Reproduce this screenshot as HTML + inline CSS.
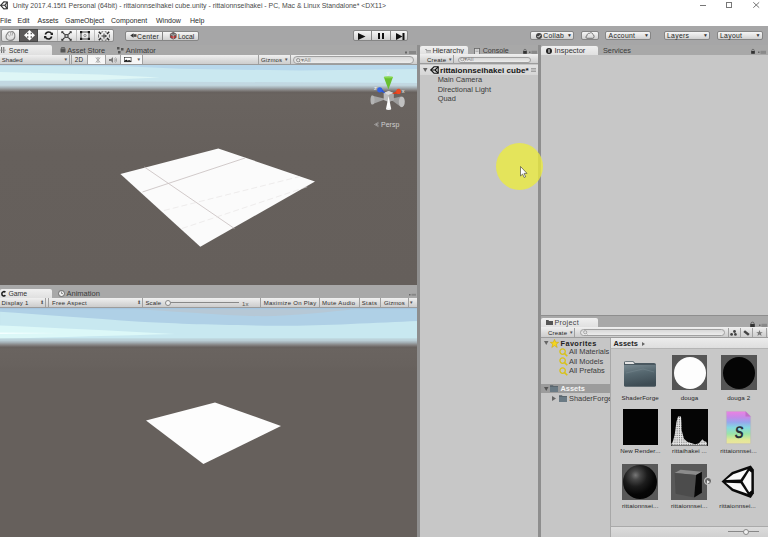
<!DOCTYPE html>
<html><head><meta charset="utf-8">
<style>
*{box-sizing:border-box;margin:0;padding:0}
html,body{width:768px;height:537px;overflow:hidden}
body{position:relative;background:#a3a3a3;font-family:"Liberation Sans",sans-serif;font-size:7.2px;color:#1a1a1a}
.a{position:absolute}
.t{position:absolute;white-space:nowrap;line-height:1}
svg{position:absolute;overflow:visible}
.btn{position:absolute;background:linear-gradient(#f6f6f6,#dcdcdc 70%,#cfcfcf);border:1px solid #858585;border-radius:2px}
.tabrow{position:absolute;background:#a8a8a8}
.tab{position:absolute;background:linear-gradient(#f0f0f0,#e0e0e0);border-radius:2px 2px 0 0}
.ptool{position:absolute;background:linear-gradient(#f0f0f0,#dadada 60%,#cdcdcd);border-bottom:1px solid #9c9c9c}
.panel{position:absolute;background:#c7c7c7}
.sep{position:absolute;width:1px;background:#a0a0a0}
.small{font-size:6px;letter-spacing:0.25px;color:#2e2e2e}
.mtxt{position:absolute;white-space:nowrap;line-height:1;font-size:7px;color:#2b2b2b;top:4px}
.lbl{position:absolute;white-space:nowrap;line-height:1;font-size:6.2px;letter-spacing:0.1px;color:#262626;text-align:center;width:50px}
</style></head>
<body>
<!-- ===== title bar ===== -->
<div class="a" style="left:0;top:0;width:768px;height:13px;background:#fff"></div>
<svg style="left:0;top:1px" width="8.3" height="8.6" viewBox="0 0 10 11"><path d="M0.6 5.5 L4.6 1 L9 1.3 L9 9.7 L4.6 10 Z" fill="none" stroke="#333" stroke-width="1.5"/><path d="M0.6 5.5 L5.8 5.5 M5.8 5.5 L9 1.3 M5.8 5.5 L9 9.7" stroke="#333" stroke-width="1.4"/></svg>
<div class="t" style="left:12.7px;top:2.6px;font-size:6.9px;color:#4a4a4a">Unity 2017.4.15f1 Personal (64bit) - rittaionnseihakei cube.unity - rittaionnseihakei - PC, Mac &amp; Linux Standalone* &lt;DX11&gt;</div>
<div class="a" style="left:699.5px;top:5px;width:6px;height:1px;background:#777"></div>
<div class="a" style="left:725.5px;top:2.3px;width:6.2px;height:6px;border:1px solid #777"></div>
<svg style="left:752.5px;top:2.3px" width="6.5" height="6" viewBox="0 0 6.5 6"><path d="M0.3 0.3 L6.2 5.7 M6.2 0.3 L0.3 5.7" stroke="#777" stroke-width="1"/></svg>

<!-- ===== menu bar ===== -->
<div class="a" style="left:0;top:13px;width:768px;height:13.2px;background:#fff">
  <div class="mtxt" style="left:0px">File</div>
  <div class="mtxt" style="left:17.5px">Edit</div>
  <div class="mtxt" style="left:37.5px">Assets</div>
  <div class="mtxt" style="left:65px">GameObject</div>
  <div class="mtxt" style="left:111px">Component</div>
  <div class="mtxt" style="left:156px">Window</div>
  <div class="mtxt" style="left:190px">Help</div>
</div>

<!-- ===== main toolbar ===== -->
<div class="a" style="left:0;top:26.2px;width:768px;height:18.8px;background:#a6a6a7"></div>
<div class="a" style="left:0.5px;top:28.8px;width:113px;height:13px;border:1px solid #8c8c8c;border-radius:2px;background:linear-gradient(#fafafa,#e6e6e6 60%,#d6d6d6)"></div>
<div class="a" style="left:19.2px;top:29px;width:18.9px;height:12.6px;background:#5b5959;border:1px solid #484848"></div>
<div class="a" style="left:57px;top:29.6px;width:1px;height:11.4px;background:#bdbdbd"></div>
<div class="a" style="left:75.5px;top:29.6px;width:1px;height:11.4px;background:#bdbdbd"></div>
<div class="a" style="left:94px;top:29.6px;width:1px;height:11.4px;background:#bdbdbd"></div>
<!-- tool icons -->
<svg style="left:4.5px;top:30.8px" width="11" height="10" viewBox="0 0 11 10"><path d="M2.6 8.6 C1.2 7.6 0.8 6 1.2 4.6 C1.5 3.4 2.4 2.6 3 1.6 C3.6 0.8 4.8 0.6 5.6 1 C6.6 0.4 8 0.6 8.8 1.6 C9.8 2.6 10.2 4.2 9.8 5.8 C9.4 7.6 8 9.2 6 9.4 C4.6 9.5 3.5 9.2 2.6 8.6 Z" fill="none" stroke="#858585" stroke-width="1.1"/><path d="M3.4 3.5 L4.6 5.5 M5.6 1.4 L5.8 4.6 M7.6 1.6 L7.2 4.6" stroke="#999" stroke-width="0.8"/></svg>
<svg style="left:23.5px;top:30.4px" width="11" height="10.5" viewBox="0 0 11 10.5"><path d="M5.5 0 L8.3 2.8 L6.6 2.8 L6.6 4.2 L8 4.2 L8 2.5 L11 5.25 L8 8 L8 6.3 L6.6 6.3 L6.6 7.7 L8.3 7.7 L5.5 10.5 L2.7 7.7 L4.4 7.7 L4.4 6.3 L3 6.3 L3 8 L0 5.25 L3 2.5 L3 4.2 L4.4 4.2 L4.4 2.8 L2.7 2.8 Z" fill="#fff"/></svg>
<svg style="left:43.6px;top:31px" width="9" height="9" viewBox="0 0 9 9"><path d="M1.3 3.6 C1.9 1.8 3 1 4.6 1 C6 1 7.1 1.7 7.7 2.9" fill="none" stroke="#1e1e1e" stroke-width="1.6"/><path d="M7.7 5.4 C7.1 7.2 6 8 4.4 8 C3 8 1.9 7.3 1.3 6.1" fill="none" stroke="#1e1e1e" stroke-width="1.6"/><path d="M6.2 3.9 L9 3.9 L8.8 1.3 Z M2.8 5.1 L0 5.1 L0.2 7.7 Z" fill="#1e1e1e"/></svg>
<svg style="left:61.2px;top:30.8px" width="11" height="10" viewBox="0 0 11 10"><path d="M1.2 1 L3.6 3.3 M9.8 1 L7.4 3.3 M1.2 9 L3.6 6.7 M9.8 9 L7.4 6.7" stroke="#333" stroke-width="1.1"/><path d="M0.3 0.2 L2.8 0.2 L0.3 2.6 Z M10.7 0.2 L8.2 0.2 L10.7 2.6 Z M0.3 9.8 L2.8 9.8 L0.3 7.4 Z M10.7 9.8 L8.2 9.8 L10.7 7.4 Z" fill="#333"/><rect x="4" y="3.7" width="3" height="2.6" fill="#eee" stroke="#333" stroke-width="1.1"/></svg>
<svg style="left:80.3px;top:30.9px" width="10" height="9" viewBox="0 0 10 9"><rect x="1" y="1" width="8" height="7" fill="none" stroke="#444" stroke-width="1"/><rect x="0" y="0" width="2.2" height="2.2" fill="#1a1a1a"/><rect x="7.8" y="0" width="2.2" height="2.2" fill="#1a1a1a"/><rect x="0" y="6.8" width="2.2" height="2.2" fill="#1a1a1a"/><rect x="7.8" y="6.8" width="2.2" height="2.2" fill="#1a1a1a"/><circle cx="5" cy="4.5" r="1.1" fill="#f4f4f4" stroke="#666" stroke-width="0.7"/></svg>
<svg style="left:98.3px;top:30.9px" width="12" height="10" viewBox="0 0 12 10"><path d="M0.8 0.8 L3 3 M11.2 0.8 L9 3 M0.8 9.2 L3 7 M11.2 9.2 L9 7" stroke="#2a2a2a" stroke-width="1.5"/><path d="M3.2 1.2 L5.2 0.6 M8.8 1.2 L6.8 0.6 M3.2 8.8 L5.2 9.4 M8.8 8.8 L6.8 9.4 M0.6 3.4 L0.6 6.6 M11.4 3.4 L11.4 6.6" stroke="#555" stroke-width="0.9"/><path d="M3.5 5 L8.5 5 M6 2.5 L6 7.5" stroke="#3a3a3a" stroke-width="1"/><path d="M7.2 3.6 L8.8 5 L7.2 6.4 Z" fill="#3a3a3a"/></svg>
<div class="btn" style="left:124.7px;top:30.8px;width:38px;height:9.8px;border-radius:2px 0 0 2px"></div>
<div class="btn" style="left:162.2px;top:30.8px;width:36.6px;height:9.8px;border-radius:0 2px 2px 0"></div>
<svg style="left:129.5px;top:32.8px" width="7" height="5" viewBox="0 0 7 5"><path d="M0.3 2.5 L3.5 0.3 L3.5 4.7 Z" fill="#333"/><rect x="3.5" y="1.2" width="3" height="2.6" fill="#444"/></svg>
<div class="t" style="left:137px;top:33.5px;font-size:6.8px;letter-spacing:0.26px;color:#262626">Center</div>
<svg style="left:170px;top:32px" width="6.5" height="7.5" viewBox="0 0 6.5 7.5"><path d="M3.25 0.4 L6.1 1.9 L6.1 5.6 L3.25 7.1 L0.4 5.6 L0.4 1.9 Z" fill="#c43434" stroke="#3a3a3a" stroke-width="0.7"/><path d="M0.4 1.9 L3.25 0.4 L6.1 1.9 L6.1 3.6 L3.25 4.4 L0.4 3.6 Z" fill="#6a6a6a"/><path d="M0.4 1.9 L3.25 3.2 L6.1 1.9 M3.25 3.2 L3.25 7.1" stroke="#ddd" stroke-width="0.5" fill="none"/></svg>
<div class="t" style="left:178px;top:33.5px;font-size:6.8px;color:#262626">Local</div>

<!-- play controls -->
<div class="btn" style="left:352.7px;top:29.9px;width:19px;height:11.4px;border-radius:2px 0 0 2px"></div>
<div class="btn" style="left:371.4px;top:29.9px;width:19.2px;height:11.4px;border-radius:0"></div>
<div class="btn" style="left:390.3px;top:29.9px;width:17.6px;height:11.4px;border-radius:0 2px 2px 0"></div>
<svg style="left:358px;top:32.7px" width="8" height="7" viewBox="0 0 8 7"><path d="M0 0 L7.5 3.5 L0 7 Z" fill="#111"/></svg>
<div class="a" style="left:378.3px;top:32.7px;width:1.8px;height:6.8px;background:#111"></div>
<div class="a" style="left:382px;top:32.7px;width:1.8px;height:6.8px;background:#111"></div>
<svg style="left:395.5px;top:32.7px" width="9" height="7" viewBox="0 0 9 7"><path d="M0 0 L6.5 3.5 L0 7 Z" fill="#111"/><rect x="6.5" y="0" width="2" height="7" fill="#111"/></svg>

<!-- right toolbar -->
<div class="btn" style="left:529.5px;top:30.9px;width:44.6px;height:9.5px"></div>
<svg style="left:535.5px;top:32.6px" width="6" height="6" viewBox="0 0 6 6"><circle cx="3" cy="3" r="3" fill="#444"/><path d="M1.5 3 L2.6 4.2 L4.6 1.8" stroke="#fff" stroke-width="0.9" fill="none"/></svg>
<div class="t" style="left:543.3px;top:33.3px;font-size:6.8px;letter-spacing:0.22px;color:#262626">Collab</div>
<div class="t" style="left:567px;top:32.5px;font-size:5px;color:#333">▼</div>
<div class="btn" style="left:580.7px;top:30.9px;width:18px;height:9.5px"></div>
<svg style="left:585px;top:32.2px" width="10" height="7" viewBox="0 0 10 7"><path d="M2 6.3 C0.6 6.3 0.4 4 1.9 3.8 C1.9 2.2 3.2 1 4.6 1.3 C5.4 0.3 7.6 0.5 7.8 2.4 C9.4 2.6 9.6 6.3 7.8 6.3 Z" fill="none" stroke="#5a5a5a" stroke-width="0.8"/></svg>
<div class="btn" style="left:605.3px;top:30.9px;width:45.6px;height:9.5px"></div>
<div class="t" style="left:608.6px;top:33.3px;font-size:6.8px;letter-spacing:0.3px;color:#262626">Account</div>
<div class="t" style="left:644px;top:33px;font-size:5px;color:#333">▼</div>
<div class="btn" style="left:664.1px;top:31px;width:45.8px;height:9px"></div>
<div class="t" style="left:667px;top:33.3px;font-size:6.8px;letter-spacing:0.32px;color:#262626">Layers</div>
<div class="t" style="left:703px;top:33px;font-size:5px;color:#333">▼</div>
<div class="btn" style="left:716.8px;top:31px;width:46.4px;height:9px"></div>
<div class="t" style="left:720px;top:33.3px;font-size:6.8px;letter-spacing:0.32px;color:#262626">Layout</div>
<div class="t" style="left:755.5px;top:33px;font-size:5px;color:#333">▼</div>

<!-- ===== SCENE PANEL ===== -->
<div class="tabrow" style="left:0;top:45px;width:417px;height:9.5px"></div>
<div class="tab" style="left:0;top:45px;width:52px;height:9.5px"></div>
<svg style="left:0;top:47px" width="6" height="6" viewBox="0 0 6 6"><path d="M1.6 0 L1.6 6 M3.8 0 L3.8 6" stroke="#555" stroke-width="0.9"/><path d="M0 3.2 L6 3.2" stroke="#999" stroke-width="0.8"/></svg>
<div class="t" style="left:8.8px;top:48.2px;font-size:6.9px;color:#333">Scene</div>
<svg style="left:59.5px;top:47.3px" width="6" height="6" viewBox="0 0 6 6"><rect x="0.5" y="1.5" width="5" height="4" fill="#555"/><path d="M1.5 1.5 L1.5 0.5 L4.5 0.5 L4.5 1.5" stroke="#555" fill="none" stroke-width="0.8"/></svg>
<div class="t" style="left:67.2px;top:46.8px;font-size:7.35px;color:#3a3a3a">Asset Store</div>
<svg style="left:116.5px;top:47.2px" width="7" height="7" viewBox="0 0 7 7"><rect x="0" y="0" width="2.5" height="2.5" fill="#555"/><rect x="4" y="1" width="2.5" height="2.5" fill="#555"/><rect x="1" y="4" width="2.5" height="2.5" fill="#555"/></svg>
<div class="t" style="left:125.8px;top:46.8px;font-size:7.5px;color:#3a3a3a">Animator</div>
<svg style="left:405px;top:50.5px" width="12" height="3" viewBox="0 0 12 3"><rect x="0" y="0.5" width="2" height="2" fill="#666"/><path d="M4 0.5 L11 0.5 M4 1.5 L11 1.5 M4 2.5 L11 2.5" stroke="#666" stroke-width="0.5"/></svg>

<div class="ptool" style="left:0;top:54.5px;width:417px;height:10px"></div>
<div class="t small" style="left:1.8px;top:57.3px;letter-spacing:0">Shaded</div>
<div class="t" style="left:63.5px;top:58px;font-size:4.5px;color:#555">▼</div>
<div class="sep" style="left:68.7px;top:55px;height:9px"></div>
<div class="sep" style="left:71.4px;top:55px;height:9px"></div>
<div class="t small" style="left:74.7px;top:57.3px;font-size:6.4px">2D</div>
<div class="sep" style="left:87px;top:55px;height:9px"></div>
<div class="a" style="left:88px;top:55px;width:17px;height:9px;background:#f6f6f6"></div>
<svg style="left:94.5px;top:56.6px" width="6" height="6" viewBox="0 0 6 6"><path d="M1 0.5 L2.4 2.4 M5 0.5 L3.6 2.4 M1 5.5 L2.4 3.6 M5 5.5 L3.6 3.6 M3 0 L3 1.6 M3 4.4 L3 6" stroke="#7a7a7a" stroke-width="0.7"/><circle cx="3" cy="3" r="0.9" fill="none" stroke="#888" stroke-width="0.5"/></svg>
<div class="sep" style="left:105px;top:55px;height:9px"></div>
<svg style="left:108.5px;top:56.5px" width="8" height="6" viewBox="0 0 8 6"><path d="M0 2 L2 2 L4 0 L4 6 L2 4 L0 4 Z" fill="#777"/><path d="M5.5 1.5 C6.3 2.3 6.3 3.7 5.5 4.5 M6.5 0.5 C7.8 1.8 7.8 4.2 6.5 5.5" stroke="#777" stroke-width="0.6" fill="none"/></svg>
<div class="sep" style="left:120px;top:55px;height:9px"></div>
<div class="a" style="left:121px;top:55px;width:21px;height:9px;background:#f6f6f6"></div>
<svg style="left:124.3px;top:56.9px" width="7.5" height="5.2" viewBox="0 0 7.5 5.2"><rect x="0.4" y="0.4" width="6.7" height="4.4" fill="#fff" stroke="#222" stroke-width="0.6"/><path d="M0.4 4.8 L0.4 4 L2.2 2.5 L3.8 3.7 L5 3 L7.1 4.1 L7.1 4.8 Z" fill="#111"/></svg>
<div class="t" style="left:136.5px;top:58px;font-size:4.5px;color:#555">▼</div>
<div class="sep" style="left:142px;top:55px;height:9px"></div>
<div class="sep" style="left:257.5px;top:55px;height:9px"></div>
<div class="t small" style="left:261px;top:57.3px;letter-spacing:0.13px">Gizmos</div>
<div class="t" style="left:284px;top:58px;font-size:4.5px;color:#555">▼</div>
<div class="sep" style="left:290px;top:55px;height:9px"></div>
<div class="a" style="left:293.4px;top:56.2px;width:120.3px;height:7.8px;border:1px solid #a0a0a0;border-radius:4px;background:linear-gradient(#d8d8d8,#ececec)"></div>
<svg style="left:296px;top:57.5px" width="12" height="5" viewBox="0 0 12 5"><circle cx="2.2" cy="2.2" r="1.7" fill="none" stroke="#777" stroke-width="0.7"/><path d="M3.4 3.4 L4.5 4.6" stroke="#777" stroke-width="0.7"/></svg>
<div class="t" style="left:301px;top:57.2px;font-size:6px;color:#8a8a8a">▾All</div>

<!-- scene view -->
<svg style="left:0;top:64.5px" width="417.2" height="220.5" viewBox="0 64.5 417.2 220.5">
  <defs><linearGradient id="sg" x1="0" y1="0" x2="0" y2="1"><stop offset="0.12" stop-color="#6a6460"/><stop offset="0.4" stop-color="#66605c"/><stop offset="1" stop-color="#655f5b"/></linearGradient><linearGradient id="hz1" x1="0" y1="0" x2="0" y2="1"><stop offset="0" stop-color="#c6dce4"/><stop offset="0.3" stop-color="#a6b2b8"/><stop offset="0.6" stop-color="#868483"/><stop offset="0.85" stop-color="#68625f"/><stop offset="1" stop-color="#66605c"/></linearGradient></defs>
  <rect x="0" y="64.5" width="417.2" height="220.5" fill="url(#sg)"/>
  <rect x="0" y="64.5" width="417.2" height="21" fill="#cae8f0"/>
  <polygon points="0,64.5 417.2,64.5 417.2,68.5 300,70 180,68.3 130,66 0,65.3" fill="#b8d8ec"/>
  <polygon points="0,71.5 100,74 160,77 100,79.5 0,80" fill="#def6f6"/>
  <polygon points="0,80.5 140,81 417.2,82.5 417.2,85.5 0,85.5" fill="#c2d8e2"/>
  <rect x="0" y="84.5" width="417.2" height="8.5" fill="url(#hz1)"/>
  <polygon points="120.4,173.4 218.3,148 315,181 200.3,246.2" fill="#fbfbfb"/>
  <line x1="144.4" y1="166.5" x2="234.4" y2="228" stroke="#c6bebe" stroke-width="0.8"/>
  <line x1="142.5" y1="191.5" x2="245.1" y2="157.5" stroke="#c6bebe" stroke-width="0.8"/>
  <line x1="164" y1="210" x2="300" y2="176" stroke="#e4e0e0" stroke-width="0.6" stroke-dasharray="6 3"/>
  <line x1="182" y1="228" x2="308" y2="186" stroke="#e4e0e0" stroke-width="0.6" stroke-dasharray="6 3"/>
</svg>
<!-- gizmo -->
<svg style="left:360px;top:70px" width="56" height="62" viewBox="0 0 56 62">
  <path d="M11.5 25.5 L26 29 L11.5 34.5 Z" fill="#a4a4a4"/>
  <ellipse cx="12.5" cy="30" rx="2" ry="4.6" fill="#b4b4b4"/>
  <path d="M30 29 L41 26.5 L41 37 Z" fill="#9c9c9c"/>
  <ellipse cx="41.8" cy="31.8" rx="3" ry="5.4" fill="#c0c0c0"/>
  <path d="M23.7 23 L28.6 21 L33.5 23 L33.5 30 L28.6 32 L23.7 30 Z" fill="#bdbdbd"/>
  <path d="M23.7 23 L28.6 21 L33.5 23 L28.6 25 Z" fill="#dadada"/>
  <path d="M28.6 25 L33.5 23 L33.5 30 L28.6 32 Z" fill="#a8a8a8"/>
  <path d="M28.6 26 L31.2 39 L26 39 Z" fill="#fdfdfd"/>
  <ellipse cx="28.6" cy="39" rx="2.6" ry="1.1" fill="#f0f0f0"/>
  <path d="M23.8 7 L33 7 L28.4 19.5 Z" fill="#68c030"/>
  <ellipse cx="28.4" cy="7.2" rx="4.6" ry="1" fill="#88d850"/>
  <path d="M17.6 20.5 L21 17.6 L25.5 23.5 Z" fill="#2a58d8"/>
  <ellipse cx="19.6" cy="19.8" rx="2.4" ry="2.6" fill="#3362e4"/>
  <path d="M40 18.8 L39.2 23.8 L32 24 Z" fill="#e03c18"/>
  <ellipse cx="38.6" cy="21.4" rx="2.4" ry="2.6" fill="#ec4a22"/>
  <text x="26.6" y="5.2" font-size="5.6" fill="#f4f4f4" font-family="Liberation Sans">y</text>
  <text x="14" y="20.3" font-size="5.6" fill="#f4f4f4" font-family="Liberation Sans">z</text>
  <text x="41.8" y="22.6" font-size="5.6" fill="#f4f4f4" font-family="Liberation Sans">x</text>
</svg>
<svg style="left:373.5px;top:122px" width="5" height="5" viewBox="0 0 5 5"><path d="M4.5 0.3 L0.5 2.5 L4.5 4.7 M4.5 1.6 L2 2.5 L4.5 3.4" stroke="#bbb" stroke-width="0.6" fill="none"/></svg>
<div class="t" style="left:381px;top:120.8px;font-size:7px;color:#cfcfcf">Persp</div>

<!-- ===== GAME PANEL ===== -->
<div class="a" style="left:0;top:285px;width:417px;height:3.5px;background:#a8a8a8"></div>
<div class="tabrow" style="left:0;top:288.5px;width:417px;height:9.2px"></div>
<div class="tab" style="left:0;top:289px;width:52px;height:8.7px"></div>
<svg style="left:0.8px;top:290.6px" width="5" height="5.6" viewBox="0 0 5 5.6"><path d="M4.4 1.3 C3.6 0.3 0.9 0.2 0.8 2.8 C0.8 5.4 3.6 5.3 4.4 4.3" stroke="#1a1a1a" stroke-width="1.5" fill="none"/></svg>
<div class="t" style="left:8.4px;top:291.2px;font-size:6.9px;color:#333">Game</div>
<svg style="left:58px;top:290.3px" width="7" height="7" viewBox="0 0 7 7"><circle cx="3.5" cy="3.5" r="3" fill="#eee" stroke="#555" stroke-width="0.8"/><path d="M3.5 1.5 L3.5 3.5 L5 3.5" stroke="#555" stroke-width="0.6" fill="none"/></svg>
<div class="t" style="left:66.5px;top:290.3px;font-size:7.5px;color:#3a3a3a">Animation</div>
<svg style="left:409px;top:293.5px" width="7" height="2" viewBox="0 0 7 2"><rect x="0" y="0" width="1.5" height="1.5" fill="#666"/><path d="M2.5 0.3 L7 0.3 M2.5 1.2 L7 1.2" stroke="#666" stroke-width="0.5"/></svg>

<div class="ptool" style="left:0;top:297.7px;width:417px;height:10px"></div>
<div class="t small" style="left:1.5px;top:300.3px;letter-spacing:0.27px">Display 1</div>
<div class="t" style="left:40px;top:300px;font-size:5px;color:#555">⬍</div>
<div class="sep" style="left:44.7px;top:298px;height:9px"></div>
<div class="sep" style="left:48.3px;top:298px;height:9px"></div>
<div class="t small" style="left:52px;top:300.3px;letter-spacing:0.27px">Free Aspect</div>
<div class="t" style="left:137px;top:300px;font-size:5px;color:#555">⬍</div>
<div class="sep" style="left:141.8px;top:298px;height:9px"></div>
<div class="t small" style="left:145.5px;top:300.3px;letter-spacing:0.12px">Scale</div>
<div class="a" style="left:167px;top:302.2px;width:72px;height:1.3px;background:#888"></div>
<div class="a" style="left:164.5px;top:299.5px;width:6px;height:6px;border-radius:50%;background:#f0f0f0;border:1px solid #888"></div>
<div class="t small" style="left:242px;top:300.8px;font-size:6px;color:#555">1x</div>
<div class="sep" style="left:260.3px;top:298px;height:9px"></div>
<div class="t small" style="left:263.7px;top:300.3px;letter-spacing:0.28px">Maximize On Play</div>
<div class="sep" style="left:319.4px;top:298px;height:9px"></div>
<div class="t small" style="left:322px;top:300.3px;letter-spacing:0.34px">Mute Audio</div>
<div class="sep" style="left:359px;top:298px;height:9px"></div>
<div class="t small" style="left:361.7px;top:300.3px;letter-spacing:0.41px">Stats</div>
<div class="sep" style="left:380.4px;top:298px;height:9px"></div>
<div class="t small" style="left:384px;top:300.3px;letter-spacing:0.09px">Gizmos</div>
<div class="sep" style="left:407.9px;top:298px;height:9px"></div>
<div class="t" style="left:409px;top:301px;font-size:4.5px;color:#555">▼</div>

<!-- game view -->
<svg style="left:0;top:307.6px" width="417.5" height="229.4" viewBox="0 307.6 417.5 229.4">
  <defs><linearGradient id="gb" x1="0" y1="0" x2="0" y2="1"><stop offset="0" stop-color="#6a6460"/><stop offset="0.7" stop-color="#68625e"/><stop offset="1" stop-color="#66605c"/></linearGradient><linearGradient id="hz2" x1="0" y1="0" x2="0" y2="1"><stop offset="0" stop-color="#c0d6de"/><stop offset="0.3" stop-color="#a4b0b6"/><stop offset="0.6" stop-color="#858382"/><stop offset="0.85" stop-color="#68625f"/><stop offset="1" stop-color="#66605c"/></linearGradient></defs>
  <rect x="0" y="307.6" width="417.5" height="229.4" fill="#66605c"/>
  <rect x="0" y="307.6" width="417.5" height="31" fill="#c8e8f0"/>
  <path d="M0 307.6 L417.5 307.6 L417.5 320.5 C380 322 320 325.5 280 325.4 C220 325 170 323 140 321.4 C90 318 40 314 0 311.4 Z" fill="#afd0e6"/>
  <path d="M135 308.6 C190 312 235 315.8 262 315.8 C295 315.5 330 311.5 355 308.6 Z" fill="#b6c8d6"/>
  <rect x="0" y="307.6" width="417.5" height="1.2" fill="#a6c6e0"/>
  <path d="M0 325 C50 327 110 330 175 333.5 C120 335 60 336.5 0 338.5 Z" fill="#dcf8f8"/>
  <path d="M0 332 L60 332.5 L0 333.5 Z" fill="#f4ffff"/>
  <rect x="0" y="338" width="417.5" height="2.5" fill="#bcd2da"/>
  <rect x="0" y="347" width="417.5" height="24" fill="url(#gb)"/>
  <rect x="0" y="339.5" width="417.5" height="8.5" fill="url(#hz2)"/>
  <polygon points="146,420 215,402 281,425.5 203.4,463.7" fill="#fdfdfd"/>
</svg>
<!-- ===== dividers ===== -->
<div class="a" style="left:417.2px;top:45px;width:2.8px;height:492px;background:#8e8e8e"></div>
<div class="a" style="left:538.2px;top:45px;width:2.8px;height:492px;background:#8e8e8e"></div>

<!-- ===== HIERARCHY ===== -->
<div class="panel" style="left:420px;top:45px;width:118.2px;height:492px"></div>
<div class="tabrow" style="left:420px;top:45px;width:118.2px;height:9.5px"></div>
<div class="tab" style="left:420px;top:46px;width:47.6px;height:8.5px"></div>
<svg style="left:425px;top:48.5px" width="6" height="4" viewBox="0 0 6 4"><path d="M0 0.5 L2 0.5 M1 1.5 L6 1.5 M1 3 L6 3" stroke="#888" stroke-width="0.7"/></svg>
<div class="t" style="left:432.4px;top:47.3px;font-size:7.4px;color:#333">Hierarchy</div>
<svg style="left:474.4px;top:47.6px" width="6" height="7" viewBox="0 0 6 7"><rect x="0.4" y="0.4" width="5.2" height="6.2" fill="#ddd" stroke="#666" stroke-width="0.8"/><path d="M1.5 2 L4.5 2 M1.5 3.5 L4.5 3.5" stroke="#888" stroke-width="0.5"/></svg>
<div class="t" style="left:482.7px;top:47.9px;font-size:7.1px;color:#3a3a3a">Console</div>
<svg style="left:522.5px;top:48.8px" width="4" height="4.8" viewBox="0 0 5 6"><path d="M1 2.5 L1 1.5 C1 0 4 0 4 1.5 L4 2.5" stroke="#444" stroke-width="0.7" fill="none"/><rect x="0.2" y="2.5" width="4.6" height="3.5" fill="#333"/></svg>
<svg style="left:529px;top:50.5px" width="8" height="3" viewBox="0 0 8 3"><rect x="0" y="0.5" width="1.5" height="1.5" fill="#666"/><path d="M2.5 0.3 L8 0.3 M2.5 1.3 L8 1.3 M2.5 2.3 L8 2.3" stroke="#666" stroke-width="0.5"/></svg>

<div class="ptool" style="left:420px;top:54.2px;width:118.2px;height:10.3px"></div>
<div class="t small" style="left:427px;top:57.2px;letter-spacing:0.2px;color:#222">Create</div>
<div class="t" style="left:448px;top:57.5px;font-size:4.5px;color:#555">▼</div>
<div class="sep" style="left:452.6px;top:55px;height:9px"></div>
<div class="a" style="left:457.8px;top:56.5px;width:73.5px;height:6.8px;border:1px solid #a0a0a0;border-radius:3.5px;background:linear-gradient(#d8d8d8,#ececec)"></div>
<svg style="left:460px;top:57.3px" width="5" height="5" viewBox="0 0 5 5"><circle cx="2.2" cy="2.2" r="1.6" fill="none" stroke="#888" stroke-width="0.6"/><path d="M3.3 3.3 L4.5 4.5" stroke="#888" stroke-width="0.6"/></svg>
<div class="t" style="left:464px;top:57px;font-size:5.8px;color:#8a8a8a">▾All</div>

<div class="a" style="left:420px;top:64.5px;width:118.2px;height:10.8px;background:linear-gradient(#e2e2e2,#d6d6d6)"></div>
<svg style="left:422.6px;top:67.5px" width="5" height="4" viewBox="0 0 5 4"><path d="M0 0 L4.5 0 L2.25 4 Z" fill="#666"/></svg>
<svg style="left:429.5px;top:65.8px" width="9" height="8" viewBox="0 0 9 8"><path d="M0.8 4 L4 0.8 L8.2 0.8 L8.2 7.2 L4 7.2 Z" fill="none" stroke="#111" stroke-width="1.1"/><path d="M0.8 4 L5 4 M5 4 L8.2 0.8 M5 4 L8.2 7.2" stroke="#111" stroke-width="1.1"/></svg>
<div class="t" style="left:440px;top:67.2px;font-size:8.1px;font-weight:bold;color:#151515">rittaionnseihakei cube*</div>
<svg style="left:531px;top:67.5px" width="5" height="4" viewBox="0 0 5 4"><path d="M0 0.5 L5 0.5 M0 2 L5 2 M0 3.5 L5 3.5" stroke="#888" stroke-width="0.7"/></svg>
<div class="t" style="left:437.7px;top:76.3px;font-size:7.4px;color:#3a3a3a">Main Camera</div>
<div class="t" style="left:437.7px;top:85.5px;font-size:7.45px;color:#3a3a3a">Directional Light</div>
<div class="t" style="left:437.7px;top:95px;font-size:7.4px;color:#3a3a3a">Quad</div>

<!-- ===== INSPECTOR ===== -->
<div class="panel" style="left:541px;top:45px;width:227px;height:270px"></div>
<div class="tabrow" style="left:541px;top:45px;width:227px;height:10px"></div>
<div class="tab" style="left:541px;top:45.9px;width:57px;height:9.1px"></div>
<svg style="left:545.5px;top:47.5px" width="6" height="6" viewBox="0 0 6 6"><circle cx="3" cy="3" r="3" fill="#222"/><rect x="2.5" y="1.2" width="1" height="3.6" fill="#fff"/></svg>
<div class="t" style="left:554.5px;top:47.1px;font-size:7.5px;color:#333">Inspector</div>
<div class="t" style="left:603px;top:47.1px;font-size:7.3px;color:#3a3a3a">Services</div>
<svg style="left:751px;top:49px" width="4" height="4.8" viewBox="0 0 5 6"><path d="M1 2.5 L1 1.5 C1 0 4 0 4 1.5 L4 2.5" stroke="#444" stroke-width="0.7" fill="none"/><rect x="0.2" y="2.5" width="4.6" height="3.5" fill="#333"/></svg>
<svg style="left:758px;top:50.5px" width="8" height="3" viewBox="0 0 8 3"><rect x="0" y="0.5" width="1.5" height="1.5" fill="#666"/><path d="M2.5 0.3 L8 0.3 M2.5 1.3 L8 1.3 M2.5 2.3 L8 2.3" stroke="#666" stroke-width="0.5"/></svg>

<!-- ===== PROJECT ===== -->
<div class="a" style="left:541px;top:314.8px;width:227px;height:1.2px;background:#8e8e8e"></div>
<div class="tabrow" style="left:541px;top:316px;width:227px;height:11px"></div>
<div class="tab" style="left:541px;top:318px;width:57px;height:9px"></div>
<svg style="left:546px;top:320px" width="7" height="5" viewBox="0 0 7 5"><path d="M0 1 L0 0 L2.5 0 L3 1 L7 1 L7 5 L0 5 Z" fill="#555"/></svg>
<div class="t" style="left:554.5px;top:319.4px;font-size:7.2px;letter-spacing:0.3px;color:#444">Project</div>
<svg style="left:750px;top:321.5px" width="5" height="5" viewBox="0 0 5 5"><path d="M1 2 L1 1.2 C1 -0.2 4 -0.2 4 1.2 L4 2" stroke="#444" stroke-width="0.7" fill="none"/><rect x="0.2" y="2" width="4.6" height="3" fill="#333"/></svg>
<svg style="left:758.5px;top:323.5px" width="8" height="3" viewBox="0 0 8 3"><rect x="0" y="0.5" width="1.5" height="1.5" fill="#666"/><path d="M2.5 0.3 L8 0.3 M2.5 1.3 L8 1.3 M2.5 2.3 L8 2.3" stroke="#666" stroke-width="0.5"/></svg>

<div class="ptool" style="left:541px;top:327px;width:227px;height:10.5px"></div>
<div class="t small" style="left:548px;top:330.3px;letter-spacing:0.2px;color:#222">Create</div>
<div class="t" style="left:569px;top:330.5px;font-size:4.5px;color:#555">▼</div>
<div class="sep" style="left:574px;top:328px;height:9px"></div>
<div class="a" style="left:580px;top:329.3px;width:145px;height:7px;border:1px solid #a0a0a0;border-radius:3.5px;background:linear-gradient(#d8d8d8,#ececec)"></div>
<svg style="left:582.5px;top:330px" width="5" height="5" viewBox="0 0 5 5"><circle cx="2.2" cy="2.2" r="1.6" fill="none" stroke="#888" stroke-width="0.6"/><path d="M3.3 3.3 L4.5 4.5" stroke="#888" stroke-width="0.6"/></svg>
<div class="sep" style="left:727.5px;top:328px;height:9px"></div>
<svg style="left:730px;top:329.5px" width="7" height="6" viewBox="0 0 7 6"><circle cx="4.5" cy="1.5" r="1.4" fill="#444"/><circle cx="1.6" cy="4.4" r="1.4" fill="#444"/><circle cx="5.4" cy="4.4" r="1.4" fill="#444"/></svg>
<div class="sep" style="left:740px;top:328px;height:9px"></div>
<svg style="left:743px;top:329.5px" width="7" height="6" viewBox="0 0 7 6"><path d="M0.3 2 L2 0.3 L6.7 4 L5 5.7 Z" fill="#444"/></svg>
<div class="sep" style="left:752px;top:328px;height:9px"></div>
<svg style="left:755.6px;top:329.5px" width="7" height="6" viewBox="0 0 7 6"><path d="M3.5 0 L4.4 2.2 L6.8 2.2 L4.9 3.6 L5.6 6 L3.5 4.6 L1.4 6 L2.1 3.6 L0.2 2.2 L2.6 2.2 Z" fill="#777"/></svg>
<div class="sep" style="left:765.5px;top:328px;height:9px"></div>

<!-- left tree -->
<div class="panel" style="left:541px;top:337.5px;width:69px;height:199.5px;background:#c6c6c6"></div>
<svg style="left:543.5px;top:341px" width="5" height="4" viewBox="0 0 5 4"><path d="M0 0 L4.5 0 L2.25 4 Z" fill="#666"/></svg>
<svg style="left:550px;top:338.8px" width="9" height="9" viewBox="0 0 9 9"><path d="M4.5 0.3 L5.7 3.2 L8.7 3.3 L6.3 5.2 L7.2 8.5 L4.5 6.6 L1.8 8.5 L2.7 5.2 L0.3 3.3 L3.3 3.2 Z" fill="#f5d61e" stroke="#c9a100" stroke-width="0.5"/></svg>
<div class="t" style="left:560.6px;top:340.3px;font-size:7.3px;letter-spacing:0.4px;font-weight:bold;color:#222">Favorites</div>
<svg style="left:558.5px;top:348px" width="9" height="9" viewBox="0 0 9 9"><circle cx="3.6" cy="3.6" r="2.7" fill="none" stroke="#d8c21a" stroke-width="1.3"/><path d="M5.6 5.6 L8.3 8.3" stroke="#d8c21a" stroke-width="1.6"/></svg>
<div class="t" style="left:569px;top:348.4px;font-size:7.4px;color:#3a3a3a">All Materials</div>
<svg style="left:558.5px;top:357.4px" width="9" height="9" viewBox="0 0 9 9"><circle cx="3.6" cy="3.6" r="2.7" fill="none" stroke="#d8c21a" stroke-width="1.3"/><path d="M5.6 5.6 L8.3 8.3" stroke="#d8c21a" stroke-width="1.6"/></svg>
<div class="t" style="left:569px;top:357.8px;font-size:7.4px;color:#3a3a3a">All Models</div>
<svg style="left:558.5px;top:366.8px" width="9" height="9" viewBox="0 0 9 9"><circle cx="3.6" cy="3.6" r="2.7" fill="none" stroke="#d8c21a" stroke-width="1.3"/><path d="M5.6 5.6 L8.3 8.3" stroke="#d8c21a" stroke-width="1.6"/></svg>
<div class="t" style="left:569px;top:367.2px;font-size:7.4px;color:#3a3a3a">All Prefabs</div>
<div class="a" style="left:541px;top:383.7px;width:69px;height:9.3px;background:#9c9c9c"></div>
<svg style="left:543.5px;top:387px" width="5" height="4" viewBox="0 0 5 4"><path d="M0 0 L4.5 0 L2.25 4 Z" fill="#555"/></svg>
<svg style="left:550px;top:384.8px" width="8" height="7" viewBox="0 0 8 7"><path d="M0 1 L0 0.2 L3 0.2 L3.5 1 L8 1 L8 7 L0 7 Z" fill="#5a666e"/><rect x="0" y="2" width="8" height="5" fill="#6a7a84"/></svg>
<div class="t" style="left:560.5px;top:385px;font-size:7.4px;font-weight:bold;color:#f4f4f4">Assets</div>
<svg style="left:552px;top:396px" width="4" height="5" viewBox="0 0 4 5"><path d="M0 0 L4 2.5 L0 5 Z" fill="#666"/></svg>
<svg style="left:558.5px;top:394.5px" width="8" height="7" viewBox="0 0 8 7"><path d="M0 1 L0 0.2 L3 0.2 L3.5 1 L8 1 L8 7 L0 7 Z" fill="#5a666e"/><rect x="0" y="2" width="8" height="5" fill="#6a7a84"/></svg>
<div class="t" style="left:569px;top:395px;font-size:7.4px;color:#3a3a3a">ShaderForge</div>

<!-- right grid -->
<div class="a" style="left:610px;top:337.5px;width:158px;height:199.5px;background:#c8c8c8;border-left:1px solid #a8a8a8"></div>
<div class="a" style="left:610px;top:337.5px;width:158px;height:11px;background:linear-gradient(#ececec,#dedede);border-bottom:1px solid #b4b4b4;border-left:1px solid #a8a8a8"></div>
<div class="t" style="left:613.5px;top:339.8px;font-size:7.4px;font-weight:bold;color:#222">Assets</div>
<svg style="left:641.5px;top:342px" width="3" height="4" viewBox="0 0 3 4"><path d="M0 0 L3 2 L0 4 Z" fill="#666"/></svg>

<!-- row1 -->
<svg style="left:623.2px;top:360px" width="34" height="27" viewBox="0 0 34 27"><defs><linearGradient id="fg" x1="0" y1="0" x2="0.25" y2="1"><stop offset="0" stop-color="#7a8a92"/><stop offset="0.45" stop-color="#566870"/><stop offset="1" stop-color="#3e4c54"/></linearGradient></defs><path d="M1 3 Q1 1 3 1 L10 1 L12 3 L31 3 Q33 3 33 5 L33 25 Q33 26.5 31.5 26.5 L2.5 26.5 Q1 26.5 1 25 Z" fill="#4a5860"/><path d="M2 1.8 L10 1.8 L11.5 4 L2 4 Z" fill="#e4e4e4"/><path d="M1 5.5 Q1 5 1.5 5 L32.5 5 Q33 5 33 5.5 L33 25 Q33 26.5 31.5 26.5 L2.5 26.5 Q1 26.5 1 25 Z" fill="url(#fg)"/><path d="M3 13 L20 9 L31 12" stroke="#8a9aa2" stroke-width="0.5" fill="none" opacity="0.6"/></svg>
<div class="lbl" style="left:615.2px;top:394.5px">ShaderForge</div>
<div class="a" style="left:671.7px;top:355.2px;width:35.7px;height:35.1px;background:#555"></div>
<div class="a" style="left:673.5px;top:356.8px;width:32px;height:32px;border-radius:50%;background:#fdfdfd"></div>
<div class="lbl" style="left:664.5px;top:394.5px">douga</div>
<div class="a" style="left:720.8px;top:355.2px;width:35.8px;height:35.1px;background:#555"></div>
<div class="a" style="left:722.7px;top:356.8px;width:32px;height:32px;border-radius:50%;background:#050505"></div>
<div class="lbl" style="left:713.7px;top:394.5px">douga 2</div>

<!-- row2 -->
<div class="a" style="left:622.5px;top:409.3px;width:35.8px;height:35.7px;background:#030303"></div>
<div class="lbl" style="left:615.4px;top:448.3px">New Render...</div>
<div class="a" style="left:671px;top:408.8px;width:37px;height:37.2px;background:#050505"></div>
<svg style="left:671px;top:408.8px" width="37" height="37" viewBox="0 0 37 37"><defs><pattern id="gp" width="1.8" height="1.8" patternUnits="userSpaceOnUse"><rect width="1.8" height="1.8" fill="#e8e8e8"/><rect x="1.1" y="1.1" width="0.7" height="0.7" fill="#222"/></pattern></defs><path d="M0.5 36.5 L0.5 34.5 L2 32 L3.7 25.5 L5.4 13 L7 7.5 L10 7.5 L10.4 13 L10.6 21 L13 29.7 L16.3 32.7 L20 34 L24 35.2 L27.5 34.5 L29 33 L31.4 30.2 L33 32 L35.6 33 L36.3 36.5 Z" fill="url(#gp)"/></svg>
<div class="lbl" style="left:664.5px;top:448.3px">rittaihakei ...</div>
<svg style="left:726.3px;top:410.9px" width="25" height="33" viewBox="0 0 25 33"><defs><linearGradient id="rb" x1="0" y1="0" x2="0" y2="1"><stop offset="0" stop-color="#ec80e2"/><stop offset="0.18" stop-color="#c68ae8"/><stop offset="0.34" stop-color="#96a8ec"/><stop offset="0.5" stop-color="#86d8e2"/><stop offset="0.7" stop-color="#9ce4a6"/><stop offset="0.88" stop-color="#e2e896"/><stop offset="1" stop-color="#ece49e"/></linearGradient></defs><path d="M0.3 0.3 L19.5 0.3 L24.7 5.5 L24.7 32.7 L0.3 32.7 Z" fill="url(#rb)" stroke="#b8b8b8" stroke-width="0.5"/><path d="M19.5 0.3 L24.7 5.5 L19.5 5.5 Z" fill="#c070c8"/><text x="0" y="0" transform="translate(8.3 27.2) scale(0.78 1) skewX(-8)" font-size="17" font-weight="bold" font-family="Liberation Sans" fill="#28323c">S</text></svg>
<div class="lbl" style="left:713.5px;top:448.3px">rittaionnsei...</div>

<!-- row3 -->
<div class="a" style="left:622.3px;top:463.5px;width:35.7px;height:36.3px;background:#595959"></div>
<div class="a" style="left:623.3px;top:464.8px;width:33.8px;height:33.8px;border-radius:50%;background:radial-gradient(circle at 37% 30%,#777 0,#474747 14%,#1c1c1c 36%,#060606 60%,#000 100%)"></div>
<div class="lbl" style="left:615.2px;top:502.5px">rittaionnsei...</div>
<div class="a" style="left:671px;top:463.5px;width:36.3px;height:36.3px;background:#595959"></div>
<svg style="left:671px;top:463.5px" width="37" height="37" viewBox="0 0 37 37"><path d="M3.6 9.1 L9.5 5.8 L30.9 7.8 L25.1 11.1 Z" fill="#8c8c8c"/><path d="M3.6 9.1 L25.1 11.1 L23.1 33.5 L4.6 29.7 Z" fill="#4c4c4c"/><path d="M25.1 11.1 L30.9 7.8 L30.9 28.7 L23.1 33.5 Z" fill="#080808"/></svg>
<div class="a" style="left:704px;top:477.2px;width:7.6px;height:7.6px;border-radius:50%;background:#6a6a6a;border:1px solid #d8d8d8"></div>
<svg style="left:706.8px;top:479.6px" width="3" height="4" viewBox="0 0 3 4"><path d="M0 0 L3 2 L0 4 Z" fill="#eee"/></svg>
<div class="lbl" style="left:664.2px;top:502.5px">rittaionnsei...</div>
<svg style="left:716px;top:460px" width="42" height="42" viewBox="0 0 42 42"><path d="M5.5 21.4 L16 12 L34.8 5.4 L37.9 9.7 L37.9 33.2 L34.8 38 L16 31 Z" fill="#0a0a0a"/><path d="M9.8 20 L17.2 14.2 L31.6 9.2 L24.6 19.6 Z" fill="#fafafa"/><path d="M26.6 21.4 L33.2 10.8 L35.4 12.6 L35.4 30.6 L33.2 32.2 Z" fill="#fafafa"/><path d="M9.8 22.8 L24.6 23.2 L31.6 33.8 L17.2 28.8 Z" fill="#fafafa"/></svg>
<div class="lbl" style="left:712.6px;top:502.5px">rittaionnsei...</div>

<!-- bottom bar -->
<div class="a" style="left:610px;top:526.4px;width:158px;height:10.6px;background:linear-gradient(#dcdcdc,#d0d0d0);border-top:1px solid #aaa;border-left:1px solid #a8a8a8"></div>
<div class="a" style="left:728px;top:531.2px;width:31px;height:1px;background:#888"></div>
<div class="a" style="left:743px;top:528.5px;width:6px;height:6px;border-radius:50%;background:#f2f2f2;border:1px solid #888"></div>

<!-- ===== yellow click highlight ===== -->
<div class="a" style="left:496px;top:143px;width:47px;height:47px;border-radius:50%;background:rgba(236,236,60,0.78)"></div>
<svg style="left:519.5px;top:166px" width="8" height="12" viewBox="0 0 8 12"><path d="M0.5 0.5 L0.5 10 L2.6 8 L4.2 11.5 L5.6 10.8 L4.1 7.4 L7 7.4 Z" fill="#fff" stroke="#333" stroke-width="0.6"/></svg>
</body></html>
